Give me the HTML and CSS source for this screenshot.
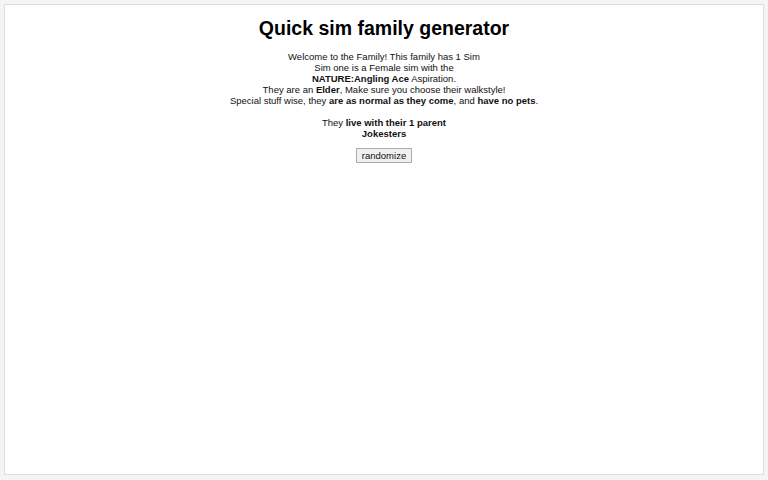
FILE: index.html
```html
<!DOCTYPE html>
<html lang="en">
<head>
  <meta charset="UTF-8">
  <title>Quick sim family generator</title>
  <link rel="stylesheet" href="styles.css">
</head>
<body>
  <div class="page">
    <h1>Quick sim family generator</h1>
    <div class="family" id="family">
      Welcome to the Family! This family has 1 Sim<br>
      Sim one is a Female sim with the<br>
      <b>NATURE:Angling Ace</b> Aspiration.<br>
      They are an <b>Elder</b>, Make sure you choose their walkstyle!<br>
      Special stuff wise, they <b>are as normal as they come</b>, and <b>have no pets</b>.
      <p class="home">They <b>live with their 1 parent</b><br>
      <b>Jokesters</b></p>
    </div>
    <button class="randomize">randomize</button>
  </div>
</body>
</html>
```
FILE: styles.css
```css
body {
  margin: 0;
  padding: 4px;
  background-color: #f4f4f4;
  font-family: 'Liberation Sans', Arial, sans-serif;
  color: #111;
}

.page {
  background-color: white;
  border: 1px solid #ddd;
  height: 471px;
  box-sizing: border-box;
  text-align: center;
}

h1 {
  font-size: 19.5px;
  margin: 12px 0 11px;
  color: #000;
}

.family {
  font-size: 9.5px;
  line-height: 11px;
}

.home {
  margin: 11px 0 0;
}

.randomize {
  margin-top: 9px;
  font-family: 'Liberation Sans', Arial, sans-serif;
  font-size: 9.5px;
  padding: 1px 5px;
  background-color: #f0f0f0;
  border: 1px solid #aaa;
  color: #111;
}
```
